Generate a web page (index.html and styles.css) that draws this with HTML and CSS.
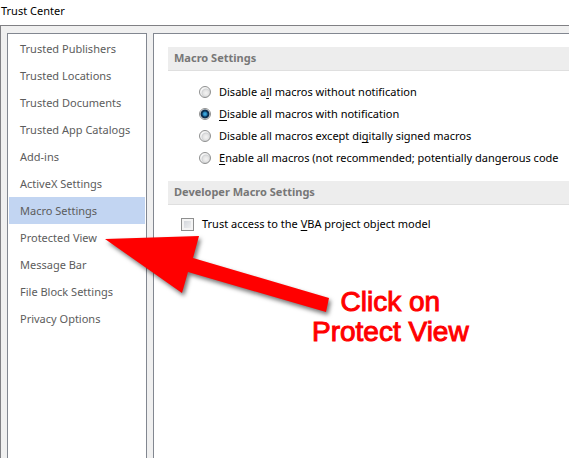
FILE: index.html
```html
<!DOCTYPE html>
<html lang="en">
<head>
<meta charset="utf-8">
<title>Trust Center</title>
<link rel="stylesheet" href="styles.css">
</head>
<body>
<h1 class="title">Trust Center</h1>
<div class="dialog">
  <nav class="sidebar" aria-label="Categories">
    <a class="item" href="#publishers">Trusted Publishers</a>
    <a class="item" href="#locations">Trusted Locations</a>
    <a class="item" href="#documents">Trusted Documents</a>
    <a class="item" href="#catalogs">Trusted App Catalogs</a>
    <a class="item" href="#addins">Add-ins</a>
    <a class="item" href="#activex">ActiveX Settings</a>
    <a class="item selected" href="#macros" aria-current="page">Macro Settings</a>
    <a class="item" href="#protected">Protected View</a>
    <a class="item" href="#messagebar">Message Bar</a>
    <a class="item" href="#fileblock">File Block Settings</a>
    <a class="item" href="#privacy">Privacy Options</a>
  </nav>
  <main class="content">
    <section class="group">
      <h2 class="heading">Macro Settings</h2>
      <div class="options radios">
        <label class="option"><input class="radio" type="radio" name="macros"><span>Disable a<u>l</u>l macros without notification</span></label>
        <label class="option"><input class="radio" type="radio" name="macros" checked><span><u>D</u>isable all macros with notification</span></label>
        <label class="option"><input class="radio" type="radio" name="macros"><span>Disable all macros except di<u>g</u>itally signed macros</span></label>
        <label class="option"><input class="radio" type="radio" name="macros"><span><u>E</u>nable all macros (not recommended; potentially dangerous code</span></label>
      </div>
    </section>
    <section class="group">
      <h2 class="heading">Developer Macro Settings</h2>
      <div class="options">
        <label class="option"><input class="check" type="checkbox"><span>Trust access to the <u>V</u>BA project object model</span></label>
      </div>
    </section>
  </main>
</div>
<svg class="arrow" width="240" height="90" viewBox="0 0 240 90" aria-hidden="true">
  <path d="M5 9 99 6 93 28 229 68 226 82 88 42 82 63Z" fill="#f00"/>
</svg>
<p class="callout">Click on<br>Protect View</p>
</body>
</html>
```
FILE: styles.css
```css
* { box-sizing: border-box; }
html, body { height: 100%; }
body {
  margin: 0;
  display: flex;
  flex-direction: column;
  overflow: hidden;
  position: relative;
  background: #fff;
  color: #000;
  font: 11px/22px "Noto Sans", "Open Sans", sans-serif;
}
.title {
  margin: 0;
  padding: 0 1px;
  height: 25px;
  font-size: 11px;
  font-weight: 400;
}
.dialog {
  flex: 1;
  display: flex;
  gap: 6px;
  padding: 7px 0 0 6px;
  background: #f0f0f0;
  border-top: 1px solid #808084;
  border-left: 1px solid #808084;
}
.sidebar {
  flex: 0 0 140px;
  padding: 1px;
  background: #fff;
  border: 1px solid #828790;
  border-bottom: 0;
}
.item {
  display: block;
  padding-left: 11px;
  line-height: 27px;
  color: #5c5c5c;
  text-decoration: none;
  white-space: nowrap;
}
.selected { background: #c2d5f2; }
.content {
  flex: 1;
  min-width: 0;
  padding: 13px 0 0 14px;
  background: #fff;
  border: solid #828790;
  border-width: 1px 0 0 1px;
}
.heading {
  margin: 0;
  padding-left: 6px;
  height: 24px;
  line-height: 22px;
  font-size: 11px;
  font-weight: 700;
  color: #777;
  background: #ededed;
  border-bottom: 1px solid #dfdfdf;
}
.options { padding: 8px 0 12px 13px; }
.radios { padding: 10px 0 12px 31px; }
.option {
  display: flex;
  align-items: center;
  gap: 8px;
  height: 22px;
  white-space: nowrap;
}
u { text-underline-offset: 2px; text-decoration-skip-ink: none; }
.radio, .check {
  appearance: none;
  flex: none;
  margin: 0;
  border: 1px solid #8e8f8f;
}
.radio {
  width: 12px;
  height: 12px;
  border-radius: 50%;
  background: radial-gradient(circle at 60% 60%, #f4f4f4 0, #e2e2e2 3px, #d0d2d4 4px, #f6f6f6 5px);
}
.radio:checked {
  background: radial-gradient(circle at 50% 50%, #4db8e8 0, #1f7db5 2px, #0c2c4c 3px, #0c2c4c 4px, #f6f6f6 5px);
}
.check {
  width: 13px;
  height: 13px;
  background: linear-gradient(135deg, #cbcfd5, #f6f6f6);
  box-shadow: inset 0 0 0 2px #f4f4f4;
}
.arrow {
  position: absolute;
  left: 100px;
  top: 230px;
  overflow: visible;
  filter: drop-shadow(2px 3px 2px #0008);
}
.callout {
  position: absolute;
  left: 312px;
  top: 287px;
  margin: 0;
  text-align: center;
  white-space: nowrap;
  color: #f00;
  font: 28px/30px "Liberation Sans", Arial, sans-serif;
  -webkit-text-stroke: 1px #f00;
}
```
